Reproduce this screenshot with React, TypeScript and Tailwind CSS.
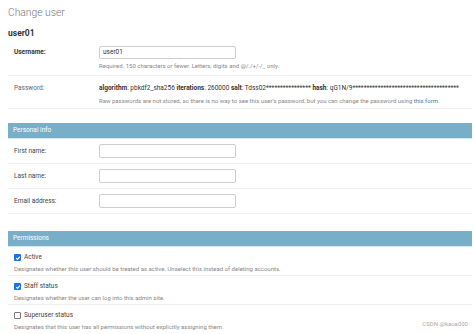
import React from "react";

const font = { fontFamily: "Roboto, 'Liberation Sans', sans-serif" };

function Check({ checked }: { checked: boolean }) {
  return checked ? (
    <span className="inline-flex h-[7px] w-[7px] items-center justify-center rounded-[1px] bg-[#1a73e8]">
      <svg width="6" height="6" viewBox="0 0 10 10">
        <path d="M2 5.2 L4.2 7.4 L8.2 2.8" stroke="white" strokeWidth="1.8" fill="none" />
      </svg>
    </span>
  ) : (
    <span className="inline-block h-[7px] w-[7px] rounded-[1px] border border-[#767676] bg-white" />
  );
}

function InputRow({ label }: { label: string }) {
  return (
    <div className="flex items-center border-b border-[#eeeeee] pl-[6px] pt-[5px] pb-[5px]">
      <div className="w-[85px] text-[6.5px] leading-[9px] text-[#444]">{label}</div>
      <div className="h-[14px] w-[137px] rounded-[2px] border border-[#cccccc] bg-white" />
    </div>
  );
}

function PermRow({ label, desc, checked, last }: { label: string; desc: string; checked: boolean; last?: boolean }) {
  return (
    <div className={`pl-[6px] pt-[6px] pb-[2px] ${last ? "" : "border-b border-[#eeeeee]"}`}>
      <div className="flex items-center gap-[3px] leading-[9px]">
        <Check checked={checked} />
        <span className="text-[6.5px] text-[#444]">{label}</span>
      </div>
      <div className="mt-[2px] whitespace-nowrap text-[6px] leading-[9px] text-[#888]">{desc}</div>
    </div>
  );
}

export default function App() {
  const salt = "Tdss02" + "*".repeat(16);
  const hash = "qG1N/9" + "*".repeat(38);
  return (
    <div className="relative h-[334px] w-[474px] overflow-hidden bg-white" style={font}>
      <div className="ml-[8px] w-[464px]">
        <div className="pt-[5px] text-[10.3px] font-light leading-[15px] text-[#777]">Change user</div>
        <div className="mt-[8px] text-[8.5px] font-bold leading-[10px] text-[#333]">user01</div>

        <div className="mt-[2px] flex border-b border-[#eeeeee] pl-[6px] pt-[6px] pb-[5px]">
          <div className="flex h-[13px] w-[85px] items-center text-[6.5px] font-bold text-[#333]">Username:</div>
          <div>
            <div className="flex h-[13px] w-[137px] items-center rounded-[2px] border border-[#cccccc] bg-white pl-[3px] text-[6.5px] text-[#333]">
              user01
            </div>
            <div className="mt-[3px] whitespace-nowrap text-[6px] leading-[8px] text-[#888]">
              Required. 150 characters or fewer. Letters, digits and @/./+/-/_ only.
            </div>
          </div>
        </div>

        <div className="flex border-b border-[#eeeeee] pl-[6px] pt-[8px] pb-[3px]">
          <div className="w-[85px] text-[6.5px] leading-[9px] text-[#666]">Password:</div>
          <div>
            <div className="whitespace-nowrap text-[6.5px] leading-[9px] text-[#333]">
              <b>algorithm</b>: pbkdf2_sha256 <b>iterations</b>: 260000 <b>salt</b>: {salt} <b>hash</b>: {hash}
            </div>
            <div className="mt-[3px] whitespace-nowrap text-[6px] leading-[9px] text-[#888]">
              Raw passwords are not stored, so there is no way to see this user’s password, but you can change the password using{" "}
              <span className="text-[#447e9b]">this form</span>.
            </div>
          </div>
        </div>

        <div className="mt-[14px] flex h-[16px] items-center border-b border-[#d5e8f0] bg-[#79aec8] pl-[5px] text-[6.5px] text-white">
          Personal info
        </div>
        <InputRow label="First name:" />
        <InputRow label="Last name:" />
        <InputRow label="Email address:" />

        <div className="mt-[17px] flex h-[16px] items-center border-b border-[#d5e8f0] bg-[#79aec8] pl-[5px] text-[6.5px] text-white">
          Permissions
        </div>
        <PermRow
          label="Active"
          checked
          desc="Designates whether this user should be treated as active. Unselect this instead of deleting accounts."
        />
        <PermRow label="Staff status" checked desc="Designates whether the user can log into this admin site." />
        <PermRow
          label="Superuser status"
          checked={false}
          last
          desc="Designates that this user has all permissions without explicitly assigning them."
        />
      </div>
      <div className="absolute right-[6px] top-[319px] text-[6px] leading-[9px] text-[#aaa]">CSDN @kaoa000</div>
    </div>
  );
}
